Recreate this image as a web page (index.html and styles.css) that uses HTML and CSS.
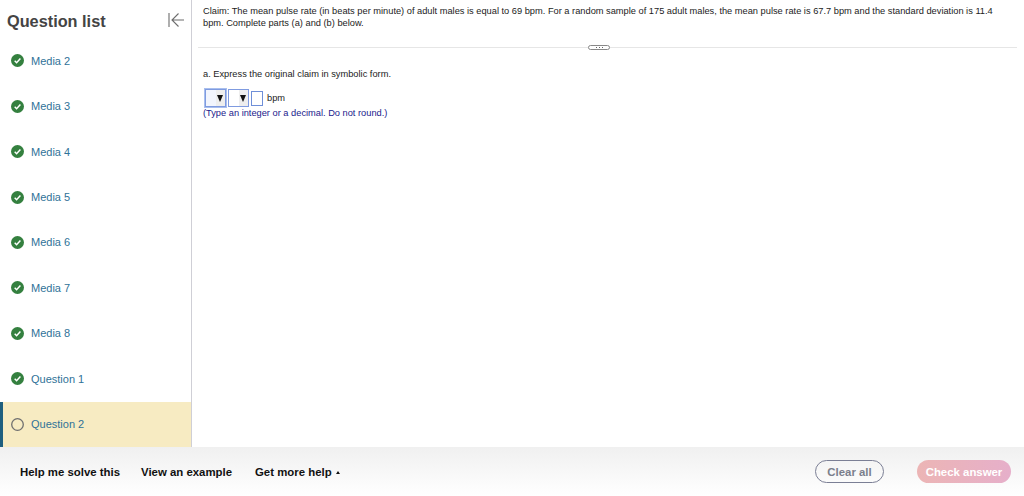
FILE: index.html
```html
<!DOCTYPE html>
<html lang="en">
<head>
<meta charset="utf-8">
<title>Question list</title>
<link rel="stylesheet" href="styles.css">
</head>
<body>
<svg class="defs" width="0" height="0" aria-hidden="true">
  <symbol id="done" viewBox="0 0 13 13">
    <circle cx="6.5" cy="6.5" r="6.5" fill="#34803f"/>
    <path d="M3.7 6.8 5.6 8.7 9.4 4.6" fill="none" stroke="#fff" stroke-width="1.5"/>
  </symbol>
</svg>
<div class="app">
  <div class="main">
    <aside class="sidebar">
      <header class="side-head">
        <h1 class="side-title">Question list</h1>
        <svg class="collapse" width="17" height="16" viewBox="0 0 17 16" aria-hidden="true">
          <path d="M1 1V15M16 8H4M10.5 1.5 4 8l6.500 6.500" fill="none" stroke="#6d6d6d" stroke-width="1.1"/>
        </svg>
      </header>
      <ul class="qlist">
        <li class="qitem"><svg class="qicon"><use href="#done"/></svg><span>Media 2</span></li>
        <li class="qitem"><svg class="qicon"><use href="#done"/></svg><span>Media 3</span></li>
        <li class="qitem"><svg class="qicon"><use href="#done"/></svg><span>Media 4</span></li>
        <li class="qitem"><svg class="qicon"><use href="#done"/></svg><span>Media 5</span></li>
        <li class="qitem"><svg class="qicon"><use href="#done"/></svg><span>Media 6</span></li>
        <li class="qitem"><svg class="qicon"><use href="#done"/></svg><span>Media 7</span></li>
        <li class="qitem"><svg class="qicon"><use href="#done"/></svg><span>Media 8</span></li>
        <li class="qitem"><svg class="qicon"><use href="#done"/></svg><span>Question 1</span></li>
        <li class="qitem current"><svg class="qicon" viewBox="0 0 13 13"><circle cx="6.500" cy="6.500" r="5.800" fill="none" stroke="#6f6f6f" stroke-width="1.300"/></svg><span>Question 2</span></li>
      </ul>
    </aside>
    <main class="content">
      <p class="claim">Claim: The mean pulse rate (in beats per minute) of adult males is equal to 69 bpm. For a random sample of 175 adult males, the mean pulse rate is 67.7 bpm and the standard deviation is 11.4 bpm. Complete parts (a) and (b) below.</p>
      <div class="divider"><span class="more"><i></i><i></i><i></i></span></div>
      <p class="part">a. Express the original claim in symbolic form.</p>
      <div class="answer">
        <span class="drop focused"><b class="arrow"></b></span>
        <span class="drop"><b class="arrow"></b></span>
        <span class="box"></span>
        <span class="unit">bpm</span>
      </div>
      <p class="hint">(Type an integer or a decimal. Do not round.)</p>
    </main>
  </div>
  <footer class="footer">
    <nav class="help">
      <span>Help me solve this</span>
      <span>View an example</span>
      <span class="more-help">Get more help <b class="up"></b></span>
    </nav>
    <div class="actions">
      <span class="btn clear">Clear all</span>
      <span class="btn check">Check answer</span>
    </div>
  </footer>
</div>
</body>
</html>
```
FILE: styles.css
```css
* { box-sizing: border-box; }
html, body { margin: 0; padding: 0; }
body { font-family: "Liberation Sans", Arial, sans-serif; background: #fff; overflow: hidden; }
.defs { position: absolute; }
.app { width: 1024px; height: 496px; display: flex; flex-direction: column; }
.main { height: 447px; display: flex; }
.sidebar { width: 192px; flex: none; border-right: 1px solid #cfcfd6; display: flex; flex-direction: column; }
.side-head { height: 38px; padding: 4px 6px 0 7px; display: flex; align-items: center; justify-content: space-between; }
.side-title { margin: 0; font-size: 16.300px; font-weight: bold; color: #444; }
.collapse { display: block; margin-top: -2px; }
.qlist { list-style: none; margin: 0; padding: 0; flex: 1; display: grid; grid-auto-rows: 1fr; }
.qitem { display: flex; align-items: center; gap: 7px; padding-left: 11px; font-size: 11px; color: #2f7298; }
.qicon { width: 13px; height: 13px; flex: none; }
.current { background: #f7ebc2; border-left: 3px solid #1f5f7f; padding-left: 8px; }
.content { flex: 1; padding: 6px 7px 0 6px; font-size: 9.270px; color: #1c1c1c; }
.claim { margin: 0; padding-left: 5px; width: 800px; line-height: 11.500px; }
.divider { margin-top: 18px; height: 1px; background: #e6e6e6; position: relative; }
.more { position: absolute; left: 390px; top: -2px; width: 22px; height: 5px; background: #fff; border: 1px solid #888; border-radius: 3px; display: flex; align-items: center; justify-content: center; gap: 2px; }
.more i { width: 1px; height: 1px; background: #666; }
.part { margin: 21px 0 0; padding-left: 5px; line-height: 11px; }
.answer { margin: 9px 0 0 7px; display: flex; align-items: center; height: 18px; }
.drop { width: 21px; height: 18px; border: 1px solid #7f9be0; display: flex; align-items: center; justify-content: flex-end; padding-right: 2px; background: linear-gradient(90deg, #fff 50%, #eeeeee 51%); margin-right: 2px; }
.drop.focused { box-shadow: 0 0 0 1px #a9bfee; background: linear-gradient(90deg, #f2f5fd 50%, #eeeeee 51%); margin-right: 2px; }
.arrow { width: 0; height: 0; border-left: 3.500px solid transparent; border-right: 3.500px solid transparent; border-top: 7px solid #111; }
.box { width: 12px; height: 15px; border: 1px solid #6f8fd8; }
.unit { margin-left: 4px; }
.hint { margin: 1px 0 0; padding-left: 5px; line-height: 11px; color: #1a1a8c; }
.footer { height: 49px; display: flex; align-items: center; justify-content: space-between; padding: 0 13px 0 20px; background: linear-gradient(#f0f0f0, #fff); }
.help { display: flex; gap: 21px; font-size: 11.400px; font-weight: bold; color: #111; }
.more-help { margin-left: 2px; }
.up { display: inline-block; width: 0; height: 0; vertical-align: 2px; margin-left: 1px; border-left: 2.500px solid transparent; border-right: 2.500px solid transparent; border-bottom: 3px solid #111; }
.actions { display: flex; align-items: center; gap: 33px; }
.btn { height: 23px; border-radius: 12px; font-size: 11.400px; font-weight: bold; display: flex; align-items: center; justify-content: center; }
.clear { width: 69px; border: 1px solid #7b7f95; color: #7b7f8c; }
.check { width: 94px; color: #fff; background: linear-gradient(90deg, #ecb5b5, #e6afca); }
```
